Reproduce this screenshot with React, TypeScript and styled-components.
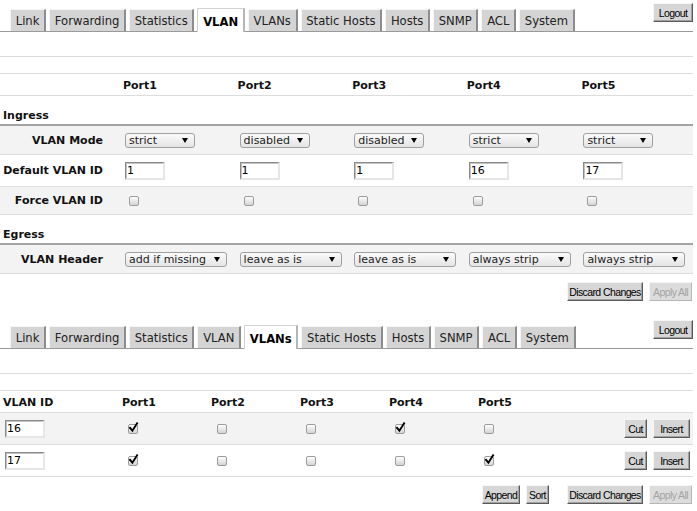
import React from "react";
import styled, { createGlobalStyle, css } from "styled-components";

const GlobalStyle = createGlobalStyle`
  html, body {
    margin: 0;
    padding: 0;
    background: #fff;
  }
  body {
    font-family: "DejaVu Sans", Verdana, sans-serif;
    color: #111;
  }
`;

const TOP_COLS = "120px repeat(5, 114.6px)";
const LIST_COLS = "119px repeat(5, 89px) 1fr";

const Page = styled.div`
  width: 693px;
`;

const Section = styled.section<{ $gap?: number }>`
  margin-top: ${p => p.$gap ?? 0}px;
`;

const TabBar = styled.div`
  display: flex;
  align-items: flex-end;
  height: 32px;
  box-sizing: border-box;
  padding-left: 10px;
  border-bottom: 1px solid #9a9a9a;
`;

const Tabs = styled.ul`
  display: flex;
  align-items: flex-end;
  gap: 3px;
  margin: 0;
  padding: 0;
  list-style: none;
`;

const Tab = styled.li<{ $active?: boolean }>`
  box-sizing: border-box;
  height: 22px;
  padding: 0 4.7px;
  display: flex;
  align-items: center;
  font-size: 11.6px;
  color: #222;
  background: #d4d4d4;
  border-top: 1px solid #f6f6f6;
  border-left: 1px solid #f6f6f6;
  border-right: 2px solid #8c8c8c;
  white-space: nowrap;
  ${p =>
    p.$active &&
    css`
      height: 24px;
      margin-bottom: -1px;
      padding-top: 2px;
      background: #fff;
      font-weight: bold;
      color: #000;
      border-top-color: #d2d2d2;
      border-left-color: #d2d2d2;
      border-right-color: #b6b6b6;
    `}
`;

const Button = styled.button<{ $w: number }>`
  box-sizing: border-box;
  width: ${p => p.$w}px;
  height: 19px;
  padding: 0;
  margin: 0;
  font-family: "Liberation Sans", Arial, sans-serif;
  font-size: 10.5px;
  letter-spacing: -0.6px;
  color: #000;
  background: #d6d6d6;
  border: 1px solid;
  border-color: #f6f6f6 #5a5a5a #5a5a5a #f6f6f6;
  box-shadow: inset -1px -1px 0 #a2a2a2;
  border-radius: 0;
  cursor: pointer;
  &:disabled {
    color: #a4a4a4;
    background: #dcdcdc;
    border-color: #f6f6f6 #b6b6b6 #b6b6b6 #f6f6f6;
    box-shadow: none;
    cursor: default;
  }
`;

const LogoutButton = styled(Button)`
  margin-left: auto;
  align-self: flex-start;
  margin-top: 3px;
`;

const Row = styled.div<{ $cols: string; $h: number; $shade?: boolean }>`
  display: grid;
  grid-template-columns: ${p => p.$cols};
  align-items: center;
  box-sizing: border-box;
  height: ${p => p.$h}px;
  background: ${p => (p.$shade ? "#f3f3f3" : "#fff")};
  border-bottom: 1px solid #dcdcdc;
`;

const GroupHead = styled.div`
  display: flex;
  align-items: flex-end;
  box-sizing: border-box;
  height: 30px;
  padding: 0 3px 2px;
  font-size: 11px;
  font-weight: bold;
  line-height: 13px;
  border-bottom: 2px solid #a3a3a3;
`;

const Cell = styled.div<{ $end?: boolean }>`
  display: flex;
  align-items: center;
  justify-content: ${p => (p.$end ? "flex-end" : "flex-start")};
  gap: 6px;
  padding: 0 3px;
  min-width: 0;
`;

const HeadCell = styled(Cell)`
  font-size: 11px;
  font-weight: bold;
  padding-top: 1px;
`;

const LabelCell = styled(Cell)`
  justify-content: flex-end;
  padding-right: 17px;
  font-size: 11px;
  font-weight: bold;
  white-space: nowrap;
`;

const SelectWrap = styled.span<{ $w: number }>`
  position: relative;
  display: inline-block;
  width: ${p => p.$w}px;
  height: 15px;
  margin-left: 2px;
  &::after {
    content: "";
    position: absolute;
    right: 7px;
    top: 5px;
    border-left: 3px solid transparent;
    border-right: 3px solid transparent;
    border-top: 5px solid #000;
    pointer-events: none;
  }
`;

const Select = styled.select`
  appearance: none;
  -webkit-appearance: none;
  box-sizing: border-box;
  display: block;
  width: 100%;
  height: 15px;
  margin: 0;
  padding: 0 0 0 3px;
  font-family: "DejaVu Sans", Verdana, sans-serif;
  font-size: 11px;
  line-height: 13px;
  color: #222;
  border: 1px solid #a0a0a0;
  border-radius: 3px;
  background: linear-gradient(#fbfbfb, #e4e4e4);
  outline: none;
`;

const IdInput = styled.input`
  box-sizing: border-box;
  width: 40px;
  height: 18px;
  margin: 0 0 0 2px;
  padding: 0 0 0 1px;
  font-family: "DejaVu Sans", Verdana, sans-serif;
  font-size: 11px;
  color: #000;
  background: #fff;
  border-style: solid;
  border-width: 1px 2px 2px 1px;
  border-color: #8a8a8a #e6e6e6 #e6e6e6 #8a8a8a;
  box-shadow: inset 1px 1px 0 #c4c4c4;
  outline: none;
`;

const CheckBox = styled.span`
  position: relative;
  display: inline-block;
  box-sizing: border-box;
  width: 10px;
  height: 10px;
  margin-left: 6px;
  border: 1px solid #9c9c9c;
  border-radius: 2px;
  background: linear-gradient(#fdfdfd, #d4d4d4);
`;

const Tick = styled.svg`
  position: absolute;
  left: -1px;
  top: -1px;
  overflow: visible;
`;

const ButtonBar = styled.div`
  display: flex;
  justify-content: flex-end;
  gap: 6px;
  padding: 8px 1px 0 0;
`;

const ButtonGroup = styled.div`
  display: flex;
  gap: 6px;
  & + & {
    margin-left: 12px;
  }
`;

const TAB_NAMES = [
  "Link",
  "Forwarding",
  "Statistics",
  "VLAN",
  "VLANs",
  "Static Hosts",
  "Hosts",
  "SNMP",
  "ACL",
  "System",
];

const MODES = ["strict", "disabled", "fallback", "check"];
const HEADERS = ["add if missing", "leave as is", "always strip"];

const PORTS = [
  { mode: "strict", id: "1", header: "add if missing" },
  { mode: "disabled", id: "1", header: "leave as is" },
  { mode: "disabled", id: "1", header: "leave as is" },
  { mode: "strict", id: "16", header: "always strip" },
  { mode: "strict", id: "17", header: "always strip" },
];

const VLANS = [
  { id: "16", members: [true, false, false, true, false] },
  { id: "17", members: [true, false, false, false, true] },
];

const PORT_NAMES = ["Port1", "Port2", "Port3", "Port4", "Port5"];

function Nav({ active }: { active: string }) {
  return (
    <TabBar>
      <Tabs>
        {TAB_NAMES.map(name => (
          <Tab key={name} $active={name === active}>
            {name}
          </Tab>
        ))}
      </Tabs>
      <LogoutButton $w={40}>Logout</LogoutButton>
    </TabBar>
  );
}

function Check({ checked }: { checked?: boolean }) {
  return (
    <CheckBox role="checkbox" aria-checked={!!checked}>
      {checked && (
        <Tick width="10" height="10" viewBox="0 0 10 10">
          <path d="M1.4 3.2 L4.4 6.7 L9.6 -1.4" fill="none" stroke="#000" strokeWidth="1.9" />
        </Tick>
      )}
    </CheckBox>
  );
}

function Dropdown({ value, options, width }: { value: string; options: string[]; width: number }) {
  return (
    <SelectWrap $w={width}>
      <Select defaultValue={value}>
        {options.map(o => (
          <option key={o}>{o}</option>
        ))}
      </Select>
    </SelectWrap>
  );
}

function VlanSettings() {
  return (
    <Section>
      <Nav active="VLAN" />
      <Row $cols={TOP_COLS} $h={25} />
      <Row $cols={TOP_COLS} $h={17} />
      <Row $cols={TOP_COLS} $h={22}>
        <HeadCell />
        {PORT_NAMES.map(p => (
          <HeadCell key={p}>{p}</HeadCell>
        ))}
      </Row>

      <GroupHead>Ingress</GroupHead>
      <Row $cols={TOP_COLS} $h={29} $shade>
        <LabelCell>VLAN Mode</LabelCell>
        {PORTS.map((p, i) => (
          <Cell key={i}>
            <Dropdown value={p.mode} options={MODES} width={70} />
          </Cell>
        ))}
      </Row>
      <Row $cols={TOP_COLS} $h={32}>
        <LabelCell>Default VLAN ID</LabelCell>
        {PORTS.map((p, i) => (
          <Cell key={i}>
            <IdInput defaultValue={p.id} />
          </Cell>
        ))}
      </Row>
      <Row $cols={TOP_COLS} $h={28} $shade>
        <LabelCell>Force VLAN ID</LabelCell>
        {PORTS.map((_, i) => (
          <Cell key={i}>
            <Check />
          </Cell>
        ))}
      </Row>

      <GroupHead>Egress</GroupHead>
      <Row $cols={TOP_COLS} $h={29} $shade>
        <LabelCell>VLAN Header</LabelCell>
        {PORTS.map((p, i) => (
          <Cell key={i}>
            <Dropdown value={p.header} options={HEADERS} width={102} />
          </Cell>
        ))}
      </Row>

      <ButtonBar>
        <ButtonGroup>
          <Button $w={76}>Discard Changes</Button>
          <Button $w={43} disabled>
            Apply All
          </Button>
        </ButtonGroup>
      </ButtonBar>
    </Section>
  );
}

function VlanTable() {
  return (
    <Section $gap={16}>
      <Nav active="VLANs" />
      <Row $cols={LIST_COLS} $h={25} />
      <Row $cols={LIST_COLS} $h={17} />
      <Row $cols={LIST_COLS} $h={22}>
        <HeadCell>VLAN ID</HeadCell>
        {PORT_NAMES.map(p => (
          <HeadCell key={p}>{p}</HeadCell>
        ))}
        <HeadCell />
      </Row>
      {VLANS.map((v, r) => (
        <Row key={v.id} $cols={LIST_COLS} $h={32} $shade={r % 2 === 0}>
          <Cell>
            <IdInput defaultValue={v.id} />
          </Cell>
          {v.members.map((m, i) => (
            <Cell key={i}>
              <Check checked={m} />
            </Cell>
          ))}
          <Cell $end>
            <Button $w={23}>Cut</Button>
            <Button $w={37}>Insert</Button>
          </Cell>
        </Row>
      ))}
      <ButtonBar>
        <ButtonGroup>
          <Button $w={38}>Append</Button>
          <Button $w={23}>Sort</Button>
        </ButtonGroup>
        <ButtonGroup>
          <Button $w={76}>Discard Changes</Button>
          <Button $w={43} disabled>
            Apply All
          </Button>
        </ButtonGroup>
      </ButtonBar>
    </Section>
  );
}

export default function App() {
  return (
    <Page>
      <GlobalStyle />
      <VlanSettings />
      <VlanTable />
    </Page>
  );
}
